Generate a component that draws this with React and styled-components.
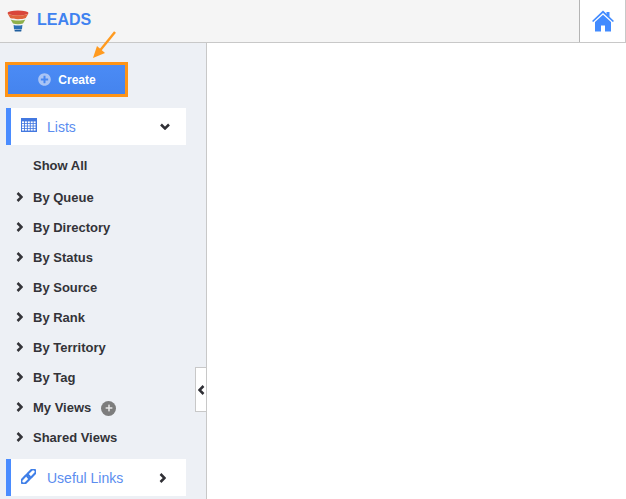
import React from 'react'
import styled, { createGlobalStyle } from 'styled-components'
import { FaPlusCircle, FaPlus } from 'react-icons/fa'

const Global = createGlobalStyle`
  html, body { margin: 0; padding: 0; height: 100%; }
  body { font-family: "Liberation Sans", Arial, sans-serif; background: #fff; overflow: hidden; }
  #root { height: 100%; }
`

const Page = styled.div`
  width: 626px;
  height: 499px;
  display: flex;
  flex-direction: column;
  overflow: hidden;
`

const Header = styled.header`
  height: 42px;
  flex: none;
  display: flex;
  align-items: center;
  background: #f5f5f5;
  border-bottom: 1px solid #c8c8c8;
  padding-left: 7px;
`

const Brand = styled.h1`
  margin: -2px 0 0 8px;
  font-size: 16px;
  font-weight: 700;
  color: #3f82f0;
  flex: 1;
`

const HomeBox = styled.div`
  width: 47px;
  height: 42px;
  display: flex;
  align-items: center;
  justify-content: center;
  background: #fff;
  border-left: 1px solid #b4b4b4;
  border-right: 1px solid #c8c8c8;
  box-sizing: border-box;
`

const Body = styled.div`
  flex: 1;
  display: flex;
  min-height: 0;
`

const Sidebar = styled.aside`
  position: relative;
  width: 207px;
  flex: none;
  background: #edf0f5;
  border-right: 1px solid #c8c8c8;
  padding: 19px 0 0 5px;
  box-sizing: border-box;
`

const CreateButton = styled.button`
  width: 123px;
  height: 35px;
  display: flex;
  align-items: center;
  justify-content: center;
  gap: 7px;
  padding: 0 0 0 1px;
  border: 3px solid #ff9416;
  background: linear-gradient(#4b8bf5, #4584ee);
  color: #fff;
  font: 700 12px "Liberation Sans", Arial, sans-serif;
  svg { color: #a9c4f5; font-size: 13px; }
`

const Pointer = styled.svg`
  position: absolute;
  left: 90px;
  top: -14px;
`

const Panel = styled.div`
  width: 175px;
  height: 37px;
  margin-left: 1px;
  margin-top: ${p => p.$top}px;
  display: flex;
  align-items: center;
  background: #fff;
  border-left: 5px solid #4a8cff;
  color: #5b8def;
  font-size: 14px;
`

const PanelIcon = styled.span`
  width: 36px;
  padding-left: 10px;
  box-sizing: border-box;
  display: flex;
  margin-top: ${p => p.$lift}px;
`

const PanelLabel = styled.span`
  flex: 1;
`

const PanelCaret = styled.span`
  display: flex;
  width: ${p => p.$width}px;
  color: #2f2f35;
`

const Menu = styled.ul`
  list-style: none;
  margin: 4px 0 7px;
  padding: 0;
`

const Item = styled.li`
  height: 30px;
  display: flex;
  align-items: center;
  font-size: 13px;
  font-weight: 700;
  color: #333338;
  padding-left: 11px;
  &:first-child { height: 32px; padding-left: 28px; margin-bottom: 1px; }
`

const ItemCaret = styled.span`
  width: 17px;
  flex: none;
  display: flex;
`

const AddBadge = styled.span`
  width: 15px;
  height: 15px;
  margin: 2px 0 0 10px;
  border-radius: 50%;
  background: #7d7d7d;
  color: #e8e8e8;
  display: flex;
  align-items: center;
  justify-content: center;
  font-size: 8px;
`

const CollapseTab = styled.div`
  position: absolute;
  right: 0;
  top: 324px;
  width: 11px;
  height: 45px;
  background: #fff;
  border: 1px solid #c8c8c8;
  border-right: none;
  box-sizing: border-box;
  display: flex;
  align-items: center;
  justify-content: center;
  color: #2f2f35;
`

const Content = styled.main`
  flex: 1;
  background: #fff;
`

const Chevron = ({ dir = 'right' }) => {
  const points = {
    right: '1.5,1 5.5,5 1.5,9',
    left: '5.5,1 1.5,5 5.5,9',
    down: '1,1.5 5,5.5 9,1.5',
  }
  const wide = dir === 'down'
  return (
    <svg width={wide ? 10 : 7} height={wide ? 7 : 10} viewBox={wide ? '0 0 10 7' : '0 0 7 10'}>
      <polyline points={points[dir]} fill="none" stroke="currentColor" strokeWidth="2.5" />
    </svg>
  )
}

const GridIcon = () => (
  <svg width="16" height="14" viewBox="0 0 16 14">
    <rect width="16" height="14" fill="#4378e0" />
    {[0, 1, 2, 3].map(r =>
      [0, 1, 2, 3, 4].map(c => (
        <rect key={`${r}-${c}`} x={1 + c * 2.9} y={3.4 + r * 2.5} width="2" height="1.7" fill="#fff" />
      ))
    )}
  </svg>
)

const LinkIcon = () => (
  <svg width="15" height="15" viewBox="0 0 15 15" fill="none" stroke="#3f7fe8" strokeWidth="2.1">
    <g transform="rotate(-45 7.5 7.5)">
      <rect x="-1.6" y="5" width="10" height="5" rx="2.5" />
      <rect x="6.6" y="5" width="10" height="5" rx="2.5" />
    </g>
  </svg>
)

const HomeIcon = () => (
  <svg width="22" height="22" viewBox="0 0 22 22">
    <path d="M14.5 2H17.5V7L14.5 4.5Z" fill="#428bff" />
    <path d="M0 11 11 0.5 22 11 20.8 12 11 3 1.2 12Z" fill="#428bff" />
    <path d="M11 4.8 19 12V21.5H13V15.5H9V21.5H3V12Z" fill="#428bff" />
  </svg>
)

const FunnelLogo = () => (
  <svg width="22" height="24" viewBox="0 0 22 24">
    <ellipse cx="11" cy="4" rx="10.5" ry="2.6" fill="#d9453a" />
    <path d="M.6 4.4C3 7 19 7 21.4 4.4L18.8 9C15 10.6 7 10.6 3.2 9Z" fill="#e0633c" />
    <path d="M3.6 10.4C7 11.8 15 11.8 18.4 10.4L16 14.6C13 15.6 9 15.6 6 14.6Z" fill="#8fb04a" />
    <path d="M6.6 16C9 16.8 13 16.8 15.4 16L15 20C13.5 20.6 8.5 20.6 7 20Z" fill="#2a6fb5" />
    <path d="M7.4 20.6C9 21.2 13 21.2 14.6 20.6L14.2 22.4H7.8Z" fill="#1f5f9f" />
  </svg>
)

const items = ['By Queue', 'By Directory', 'By Status', 'By Source', 'By Rank', 'By Territory', 'By Tag']

const App = () => (
  <>
    <Global />
    <Page>
      <Header>
        <FunnelLogo />
        <Brand>LEADS</Brand>
        <HomeBox><HomeIcon /></HomeBox>
      </Header>
      <Body>
        <Sidebar>
          <Pointer width="30" height="34" viewBox="0 0 30 34">
            <path d="M25 3 8 24" stroke="#ff9a1f" strokeWidth="2.4" fill="none" />
            <path d="M3 29 15 24 7 17Z" fill="#ff9a1f" />
          </Pointer>
          <CreateButton><FaPlusCircle />Create</CreateButton>
          <Panel $top={11}>
            <PanelIcon $lift={-4}><GridIcon /></PanelIcon>
            <PanelLabel>Lists</PanelLabel>
            <PanelCaret $width={26}><Chevron dir="down" /></PanelCaret>
          </Panel>
          <Menu>
            <Item>Show All</Item>
            {items.map(name => (
              <Item key={name}><ItemCaret><Chevron /></ItemCaret>{name}</Item>
            ))}
            <Item>
              <ItemCaret><Chevron /></ItemCaret>My Views
              <AddBadge><FaPlus /></AddBadge>
            </Item>
            <Item><ItemCaret><Chevron /></ItemCaret>Shared Views</Item>
          </Menu>
          <Panel $top={0}>
            <PanelIcon $lift={-2}><LinkIcon /></PanelIcon>
            <PanelLabel>Useful Links</PanelLabel>
            <PanelCaret $width={27}><Chevron /></PanelCaret>
          </Panel>
          <CollapseTab><Chevron dir="left" /></CollapseTab>
        </Sidebar>
        <Content />
      </Body>
    </Page>
  </>
)

export default App
